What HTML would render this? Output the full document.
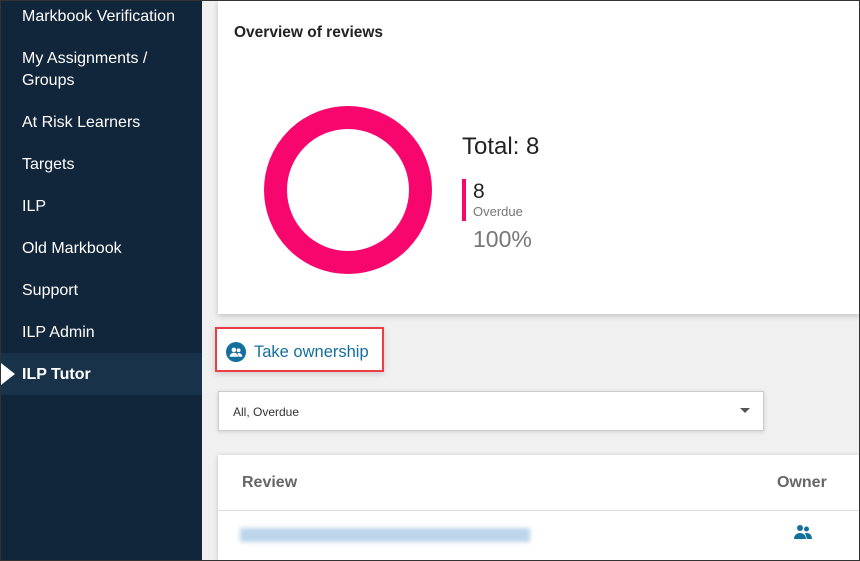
<!DOCTYPE html>
<html><head><meta charset="utf-8"><style>
*{margin:0;padding:0;box-sizing:border-box}
html,body{width:860px;height:561px;overflow:hidden}
body{font-family:"Liberation Sans",sans-serif;background:#f0f0f0;position:relative}
.frame{position:absolute;left:0;top:0;width:860px;height:561px;border:1px solid #333;z-index:9}
.side{position:absolute;left:0;top:0;width:202px;height:561px;background:#12263b}
.side div{position:absolute;left:22px;color:#fff;font-size:16px;line-height:22px;margin-top:1px}
.act{position:absolute;left:0;top:353px;width:202px;height:42px;background:#173249}
.tri{position:absolute;left:1px;top:363px;width:0;height:0;border-top:11px solid transparent;border-bottom:11px solid transparent;border-left:14px solid #fff}
.card{position:absolute;left:218px;top:0;width:642px;height:314px;background:#fff;box-shadow:0 2px 6px rgba(0,0,0,.2)}
.t{position:absolute;font-size:16px;margin-top:1px}
</style></head><body>
<div class="frame"></div>
<div class="side">
<div style="top:5px">Markbook Verification</div>
<div style="top:47px">My Assignments /<br>Groups</div>
<div style="top:111px">At Risk Learners</div>
<div style="top:153px">Targets</div>
<div style="top:195px">ILP</div>
<div style="top:237px">Old Markbook</div>
<div style="top:279px">Support</div>
<div style="top:321px">ILP Admin</div>
</div>
<div class="act"></div><div class="tri"></div>
<div class="side" style="background:none"><div style="top:363px;font-weight:bold">ILP Tutor</div></div>
<div class="card">
<div class="t" style="left:16px;top:23px;color:#222;font-weight:bold;font-size:15.5px">Overview of reviews</div>
<div style="position:absolute;left:46px;top:106px;width:168px;height:168px;border-radius:50%;border:23px solid #f7076d"></div>
<div class="t" style="left:244px;top:132px;font-size:24px;color:#222">Total: 8</div>
<div style="position:absolute;left:244px;top:179px;width:4px;height:42px;background:#f7076d"></div>
<div class="t" style="left:255px;top:179px;font-size:21px;color:#222">8</div>
<div class="t" style="left:255px;top:203px;font-size:13px;color:#777">Overdue</div>
<div class="t" style="left:255px;top:225px;font-size:23px;color:#777">100%</div>
</div>
<div style="position:absolute;left:215px;top:327px;width:169px;height:45px;border:2px solid #ec3c45;background:#fff;box-shadow:0 2px 6px rgba(0,0,0,.15)"></div>
<svg style="position:absolute;left:226px;top:342px" width="20" height="20" viewBox="0 0 19 19"><circle cx="9.5" cy="9.5" r="9.5" fill="#13709c"/><circle cx="7.5" cy="7.5" r="2.2" fill="#fff"/><circle cx="12" cy="7.8" r="1.8" fill="#fff"/><path d="M3.5 14c0-2.5 2-3.8 4-3.8s4 1.3 4 3.8z M11 10.5c2.2-.3 4.5.8 4.5 3.5h-3.5" fill="#fff"/></svg>
<div class="t" style="left:254px;top:342px;color:#13709c;font-size:16.5px">Take ownership</div>
<div style="position:absolute;left:218px;top:391px;width:546px;height:40px;background:#fff;border:1px solid #ccc;box-shadow:0 1px 4px rgba(0,0,0,.15)"></div>
<div class="t" style="left:233px;top:404px;font-size:12px;color:#333">All, Overdue</div>
<div style="position:absolute;left:740px;top:408px;border-left:5px solid transparent;border-right:5px solid transparent;border-top:5px solid #555"></div>
<div style="position:absolute;left:218px;top:455px;width:642px;height:106px;background:#fff;box-shadow:0 1px 5px rgba(0,0,0,.2)"></div>
<div class="t" style="left:242px;top:473px;color:#666;font-weight:bold">Review</div>
<div class="t" style="left:777px;top:473px;color:#666;font-weight:bold">Owner</div>
<div style="position:absolute;left:218px;top:510px;width:642px;height:1px;background:#ddd"></div>
<div style="position:absolute;left:240px;top:528px;width:290px;height:14px;background:#bcd5ea;filter:blur(2px)"></div>
<svg style="position:absolute;left:793px;top:524px" width="20" height="16" viewBox="0 0 20 16"><circle cx="7" cy="4" r="3" fill="#13709c"/><circle cx="13.5" cy="5" r="2.5" fill="#13709c"/><path d="M1 15c0-4 3-6 6-6s6 2 6 6z M12 9c3-.5 7 .8 7 6h-5z" fill="#13709c"/></svg>
</body></html>
